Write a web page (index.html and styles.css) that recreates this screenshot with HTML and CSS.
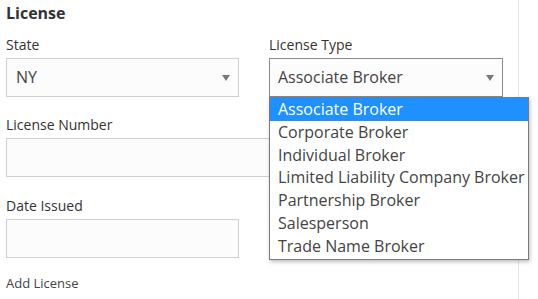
FILE: index.html
```html
<!DOCTYPE html>
<html>
<head>
<meta charset="utf-8">
<link rel="stylesheet" href="styles.css">
</head>
<body>
<div class="page">
  <div class="panel">
    <h2 class="title">License</h2>
    <div class="row">
      <div class="field">
        <label class="label">State</label>
        <div class="select">NY<span class="caret"></span></div>
      </div>
      <div class="field type">
        <label class="label">License Type</label>
        <div class="select active">Associate Broker<span class="caret"></span></div>
        <ul class="menu">
          <li class="sel">Associate Broker</li>
          <li>Corporate Broker</li>
          <li>Individual Broker</li>
          <li>Limited Liability Company Broker</li>
          <li>Partnership Broker</li>
          <li>Salesperson</li>
          <li>Trade Name Broker</li>
        </ul>
      </div>
    </div>
    <div class="field number">
      <label class="label">License Number</label>
      <div class="input wide"></div>
    </div>
    <div class="field date">
      <label class="label">Date Issued</label>
      <div class="input"></div>
    </div>
    <a class="add">Add License</a>
  </div>
  <div class="sidebar"></div>
</div>
</body>
</html>
```
FILE: styles.css
```css
html, body { margin: 0; padding: 0; background: #fff; }
body { font-family: "Open Sans", "Liberation Sans", sans-serif; color: #333; }
.page { display: flex; height: 299px; overflow: hidden; }
.panel { width: 518px; box-sizing: border-box; padding: 0 0 0 6px; }
.sidebar { flex: 1; border-left: 1px solid #e6e6e6; }
.title { margin: 0; padding-top: 3px; font-size: 16px; font-weight: 700; line-height: 20px; color: #333; }
.row { display: flex; gap: 30px; margin-top: 12px; }
.field { display: flex; flex-direction: column; }
.number { margin-top: 18px; }
.date { margin-top: 19px; }
.type { position: relative; }
.label { font-size: 14px; line-height: 20px; margin-bottom: 3px; color: #333; }
.select, .input { width: 233px; height: 39px; box-sizing: border-box; border: 1px solid #d0d0d0; background: #fcfcfc; }
.select { position: relative; font-size: 16px; line-height: 37px; padding-left: 9px; color: #444; }
.select.active { border-color: #8a8a8a; width: 234px; padding-left: 8px; }
.caret { position: absolute; right: 8px; top: 16px; width: 0; height: 0; border-left: 4.5px solid transparent; border-right: 4.5px solid transparent; border-top: 6px solid #7a7a7a; }
.input.wide { width: 496px; }
.menu { position: absolute; left: 0; top: 100%; width: 260px; box-sizing: border-box; margin: 0; padding: 0 0 1px; list-style: none; background: #fff; border: 1px solid #7a7a7a; box-shadow: 1px 2px 4px rgba(0,0,0,0.25); z-index: 2; }
.menu li { font-size: 16px; line-height: 22.8px; padding-left: 8px; color: #444; white-space: nowrap; }
.menu li.sel { background: #1e90ff; color: #fff; }
.add { display: block; margin-top: 16px; font-size: 13px; line-height: 18px; color: #444; }
```
